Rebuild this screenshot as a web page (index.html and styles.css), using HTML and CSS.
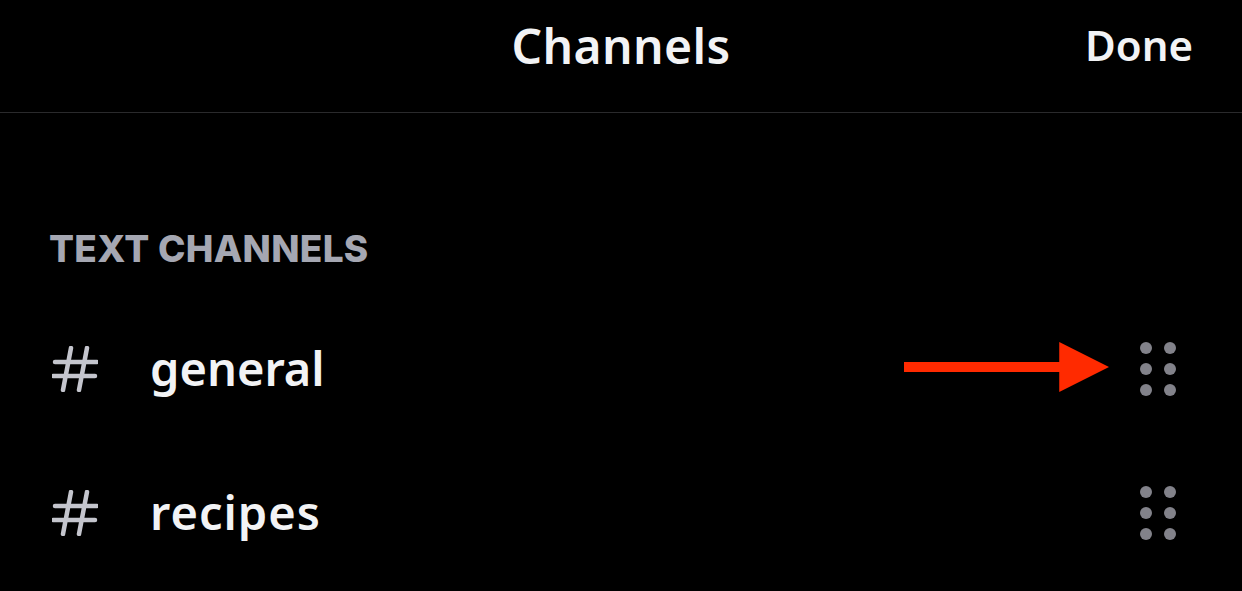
FILE: index.html
```html
<!DOCTYPE html>
<html>
<head>
    <meta charset="UTF-8">
    <meta name="viewport" content="width=device-width, initial-scale=1.0">
    <title>Channels</title>
    <link rel="stylesheet" href="styles.css">
</head>
<body>
    <div class="screen">
        <header class="topbar">
            <h1>Channels</h1>
            <button class="done">Done</button>
        </header>

        <section class="channels">
            <h2>TEXT CHANNELS</h2>
            <div class="row">
                <svg class="hash" viewBox="0 0 46 46"><path d="M19 2 L11 44 M35 2 L27 44 M3 16 H45 M1 30 H43"/></svg>
                <span class="name">general</span>
                <svg class="grip" viewBox="0 0 36 54"><circle cx="6" cy="6" r="6"/><circle cx="30" cy="6" r="6"/><circle cx="6" cy="27" r="6"/><circle cx="30" cy="27" r="6"/><circle cx="6" cy="48" r="6"/><circle cx="30" cy="48" r="6"/></svg>
            </div>
            <div class="row">
                <svg class="hash" viewBox="0 0 46 46"><path d="M19 2 L11 44 M35 2 L27 44 M3 16 H45 M1 30 H43"/></svg>
                <span class="name recipes">recipes</span>
                <svg class="grip" viewBox="0 0 36 54"><circle cx="6" cy="6" r="6"/><circle cx="30" cy="6" r="6"/><circle cx="6" cy="27" r="6"/><circle cx="30" cy="27" r="6"/><circle cx="6" cy="48" r="6"/><circle cx="30" cy="48" r="6"/></svg>
            </div>
        </section>

        <!-- annotation drawn over the screenshot -->
        <svg class="arrow" viewBox="0 0 206 50"><path d="M0 20 H156 V0 L206 25 L156 50 V30 H0 Z"/></svg>
    </div>
</body>
</html>
```

FILE: styles.css
```css
:root {
    --bg-color: #000000;
    --text-color: #f2f3f5;
    --label-color: #a5a7b2;
    --hash-color: #c4c5cd;
    --grip-color: #82828a;
    --line-color: #2a2a2c;
    --arrow-color: #ff2a00;
}
html, body {
    margin: 0;
    height: 100%;
    overflow: hidden;
}
body {
    font-family: "Noto Sans", "Open Sans", sans-serif;
    background-color: var(--bg-color);
    color: var(--text-color);
}
.screen {
    position: relative;
    height: 591px;
    overflow: hidden;
}
.topbar {
    position: relative;
    display: flex;
    align-items: center;
    justify-content: center;
    height: 113px;
    padding-bottom: 20px;
    box-sizing: border-box;
    border-bottom: 1px solid var(--line-color);
}
.topbar h1 {
    margin: 0;
    font-size: 48px;
    font-weight: 600;
    line-height: 60px;
    letter-spacing: 0.4px;
}
.done {
    position: absolute;
    right: 49px;
    top: 15px;
    padding: 0;
    border: none;
    background: none;
    color: var(--text-color);
    font-family: inherit;
    font-size: 42px;
    font-weight: 600;
    line-height: 60px;
}
.channels {
    padding: 0 66px 0 49px;
}
.channels h2 {
    margin: 117px 0 0;
    font-family: Inter, "Noto Sans", sans-serif;
    font-size: 37px;
    font-weight: 800;
    line-height: 38px;
    letter-spacing: 0.3px;
    color: var(--label-color);
}
.row {
    display: flex;
    align-items: center;
    height: 144px;
}
.channels h2 + .row {
    margin-top: 29px;
}
.hash {
    width: 46px;
    height: 46px;
    margin-left: 3px;
    flex: none;
    fill: none;
    stroke: var(--hash-color);
    stroke-width: 4.5;
    stroke-linecap: round;
}
.name {
    margin-left: 52px;
    flex: 1;
    font-size: 47px;
    font-weight: 600;
    line-height: 60px;
    position: relative;
    top: -1px;
}
.recipes {
    letter-spacing: 1px;
}
.grip {
    width: 36px;
    height: 54px;
    flex: none;
    fill: var(--grip-color);
}
.arrow {
    position: absolute;
    left: 904px;
    top: 342px;
    width: 205px;
    height: 50px;
    fill: var(--arrow-color);
}
```
